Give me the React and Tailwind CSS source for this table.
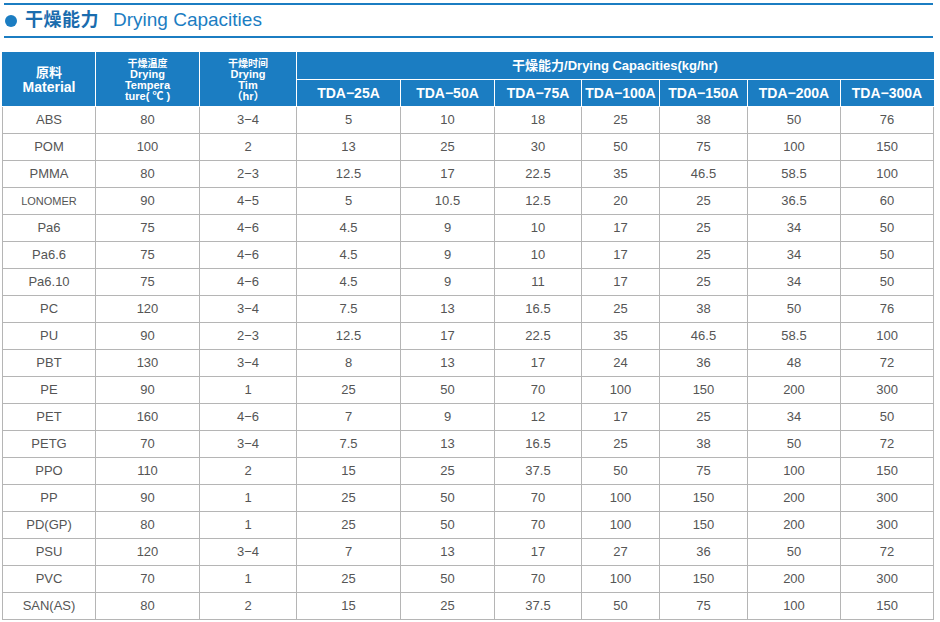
import React from 'react';

const models = ['TDA−25A', 'TDA−50A', 'TDA−75A', 'TDA−100A', 'TDA−150A', 'TDA−200A', 'TDA−300A'];
const widths = [93, 104, 97, 104, 94, 87, 78, 88, 93, 93];

const rows = [
  ['ABS', '80', '3−4', '5', '10', '18', '25', '38', '50', '76'],
  ['POM', '100', '2', '13', '25', '30', '50', '75', '100', '150'],
  ['PMMA', '80', '2−3', '12.5', '17', '22.5', '35', '46.5', '58.5', '100'],
  ['LONOMER', '90', '4−5', '5', '10.5', '12.5', '20', '25', '36.5', '60'],
  ['Pa6', '75', '4−6', '4.5', '9', '10', '17', '25', '34', '50'],
  ['Pa6.6', '75', '4−6', '4.5', '9', '10', '17', '25', '34', '50'],
  ['Pa6.10', '75', '4−6', '4.5', '9', '11', '17', '25', '34', '50'],
  ['PC', '120', '3−4', '7.5', '13', '16.5', '25', '38', '50', '76'],
  ['PU', '90', '2−3', '12.5', '17', '22.5', '35', '46.5', '58.5', '100'],
  ['PBT', '130', '3−4', '8', '13', '17', '24', '36', '48', '72'],
  ['PE', '90', '1', '25', '50', '70', '100', '150', '200', '300'],
  ['PET', '160', '4−6', '7', '9', '12', '17', '25', '34', '50'],
  ['PETG', '70', '3−4', '7.5', '13', '16.5', '25', '38', '50', '72'],
  ['PPO', '110', '2', '15', '25', '37.5', '50', '75', '100', '150'],
  ['PP', '90', '1', '25', '50', '70', '100', '150', '200', '300'],
  ['PD(GP)', '80', '1', '25', '50', '70', '100', '150', '200', '300'],
  ['PSU', '120', '3−4', '7', '13', '17', '27', '36', '50', '72'],
  ['PVC', '70', '1', '25', '50', '70', '100', '150', '200', '300'],
  ['SAN(AS)', '80', '2', '15', '25', '37.5', '50', '75', '100', '150'],
];

export default function App() {
  return (
    <div
      className="w-[940px] h-[622px] overflow-hidden bg-white"
      style={{ fontFamily: '"Liberation Sans", "Noto Sans CJK SC", Arial, sans-serif' }}
    >
      {/* section title */}
      <div className="ml-[4px] mt-[3px] w-[929px]">
        <div className="h-[2px] bg-[#1b7dc2]" />
        <div className="flex items-center h-[31px] pl-[1px]">
          <span className="w-[12px] h-[12px] rounded-full bg-[#1b7dc2]" />
          <span className="ml-[8px] text-[18px] font-bold text-[#1a6cae] tracking-[0.5px]">干燥能力</span>
          <span className="ml-[14px] text-[19px] text-[#1b7dc2]">Drying Capacities</span>
        </div>
        <div className="h-[2px] bg-[#1b7dc2]" />
      </div>

      {/* capacity table */}
      <table className="ml-[2px] mt-[14px] table-fixed border-collapse w-[931px]">
        <colgroup>
          {widths.map((w, i) => (
            <col key={i} style={{ width: w }} />
          ))}
        </colgroup>
        <thead className="bg-[#1b7dc2] text-white font-bold">
          <tr className="h-[27px]">
            <th rowSpan={2} className="border border-white border-t-[#1b7dc2] border-l-[#1b7dc2] text-[13px] leading-[15px] font-bold">
              原料<br />
              <span className="text-[14px]">Material</span>
            </th>
            <th rowSpan={2} className="border border-white border-t-[#1b7dc2] text-[11px] leading-[11px] font-bold">
              <span className="text-[10px]">干燥温度</span><br />
              Drying<br />
              Tempera<br />
              ture( ℃ )
            </th>
            <th rowSpan={2} className="border border-white border-t-[#1b7dc2] text-[11px] leading-[11px] font-bold">
              <span className="text-[10px]">干燥时间</span><br />
              Drying<br />
              Tim<br />
              （hr）
            </th>
            <th colSpan={7} className="border border-white border-t-[#1b7dc2] border-r-[#1b7dc2] text-[13px] font-bold">
              干燥能力/Drying Capacities(kg/hr)
            </th>
          </tr>
          <tr className="h-[27px]">
            {models.map((m, i) => (
              <th
                key={m}
                className={
                  i === models.length - 1
                    ? 'border border-white border-r-[#1b7dc2] text-[14px] font-bold'
                    : 'border border-white text-[14px] font-bold'
                }
              >
                {m}
              </th>
            ))}
          </tr>
        </thead>
        <tbody className="text-[#555555] text-[13px]">
          {rows.map((r) => (
            <tr key={r[0]} className="h-[27px]">
              {r.map((c, i) => (
                <td
                  key={i}
                  className={
                    i === 0 && c === 'LONOMER'
                      ? 'border border-[#b5b5b5] text-center text-[11px] p-0'
                      : 'border border-[#b5b5b5] text-center p-0'
                  }
                >
                  {c}
                </td>
              ))}
            </tr>
          ))}
        </tbody>
      </table>
    </div>
  );
}
